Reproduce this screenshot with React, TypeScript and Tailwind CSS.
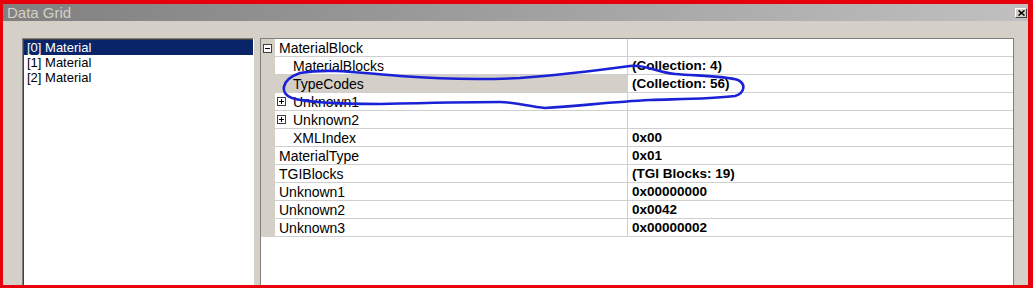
const font = { fontFamily: '"Liberation Sans", Arial, sans-serif' };

type Row = {
  label: string;
  value: string;
  indent: number;
  box?: "plus" | "minus";
  selected?: boolean;
};

const rows: Row[] = [
  { label: "MaterialBlock", value: "", indent: 0, box: "minus" },
  { label: "MaterialBlocks", value: "(Collection: 4)", indent: 1 },
  { label: "TypeCodes", value: "(Collection: 56)", indent: 1, selected: true },
  { label: "Unknown1", value: "", indent: 1, box: "plus" },
  { label: "Unknown2", value: "", indent: 1, box: "plus" },
  { label: "XMLIndex", value: "0x00", indent: 1 },
  { label: "MaterialType", value: "0x01", indent: 0 },
  { label: "TGIBlocks", value: "(TGI Blocks: 19)", indent: 0 },
  { label: "Unknown1", value: "0x00000000", indent: 0 },
  { label: "Unknown2", value: "0x0042", indent: 0 },
  { label: "Unknown3", value: "0x00000002", indent: 0 },
];

const items = ["[0] Material", "[1] Material", "[2] Material"];

function ExpandBox({ kind }: { kind: "plus" | "minus" }) {
  return (
    <svg width="9" height="9" viewBox="0 0 9 9" className="shrink-0">
      <rect x="0.5" y="0.5" width="8" height="8" fill="white" stroke="#404040" />
      <line x1="2" y1="4.5" x2="7" y2="4.5" stroke="black" />
      {kind === "plus" && <line x1="4.5" y1="2" x2="4.5" y2="7" stroke="black" />}
    </svg>
  );
}

function GridRow({ row }: { row: Row }) {
  return (
    <div className="flex h-[18px]">
      <div className="w-[14px] shrink-0 bg-[#d4d0c8] flex items-center justify-end pr-[3px]">
        {row.indent === 0 && row.box && <ExpandBox kind={row.box} />}
      </div>
      <div
        className={`w-[353px] shrink-0 flex items-center border-b border-r border-[#cfcfcf] text-[14px] text-black ${
          row.selected ? "bg-[#d4d0c8]" : "bg-white"
        } ${row.indent ? "pl-[2px]" : "pl-[4px]"}`}
      >
        {row.indent > 0 && (
          <span className="w-[16px] flex items-center">
            {row.box && <ExpandBox kind={row.box} />}
          </span>
        )}
        <span className="leading-[17px] pt-[2px]">{row.label}</span>
      </div>
      <div className="flex-1 flex items-center border-b border-[#cfcfcf] pl-[4px] pt-[2px] text-[13.5px] font-bold text-black bg-white">
        {row.value}
      </div>
    </div>
  );
}

export default function App() {
  return (
    <div
      className="relative w-[1033px] h-[288px] border-red-600 border-l-[3px] border-t-[4px] border-r-[5px] border-b-[3px] bg-[#d4d0c8] flex flex-col overflow-hidden"
      style={font}
    >
      {/* title bar */}
      <div className="h-[17px] shrink-0 flex items-center bg-gradient-to-r from-[#808080] to-[#c0c0c0] pl-[4px] pr-[1px]">
        <span className="text-[15px] leading-[17px] text-[#d4d0c8]">Data Grid</span>
        <div className="ml-auto w-[12px] h-[10px] bg-[#d4d0c8] border-t border-l border-white border-r border-b border-r-[#404040] border-b-[#404040] flex items-center justify-center">
          <svg width="7" height="6" viewBox="0 0 7 6">
            <path d="M0.5 0.5 L6.5 5.5 M6.5 0.5 L0.5 5.5" stroke="black" strokeWidth="1.6" />
          </svg>
        </div>
      </div>

      {/* body */}
      <div className="flex-1 flex pl-[19px] pt-[17px] pr-[14px] min-h-0">
        {/* list */}
        <div className="w-[232px] shrink-0 bg-white border-t border-l border-[#808080] shadow-[inset_1px_1px_0_#404040] border-r border-r-white pt-[1px] pl-[1px]">
          {items.map((it, i) => (
            <div
              key={it}
              className={`h-[15px] leading-[16px] text-[13px] pl-[3px] ${
                i === 0 ? "bg-[#0a246a] text-white" : "text-black"
              }`}
            >
              {it}
            </div>
          ))}
        </div>

        {/* splitter */}
        <div className="w-[6px] shrink-0 bg-[#d4d0c8]" />

        {/* property grid */}
        <div className="flex-1 bg-white border-t border-l border-r border-[#808080] flex flex-col">
          {rows.map((r, i) => (
            <GridRow key={i} row={r} />
          ))}
        </div>
      </div>

      {/* hand-drawn annotation */}
      <svg
        className="absolute left-[-3px] top-[-4px] pointer-events-none"
        width="1033"
        height="288"
        viewBox="0 0 1033 288"
      >
        <path
          d="M300 73 C 330 68, 360 73, 400 76 C 440 79, 480 80, 520 78 C 560 75, 600 70, 630 66 C 645 64, 655 72, 675 74 C 700 76, 725 76, 738 80 C 746 84, 745 93, 735 96 C 710 99, 680 99, 650 100 C 610 102, 580 106, 545 108 C 530 107, 515 102, 500 102 C 460 102, 420 103, 380 104 C 340 104, 305 102, 292 98 C 280 94, 280 80, 300 73"
          fill="none"
          stroke="#1b22d6"
          strokeWidth="2.6"
          strokeLinecap="round"
          strokeLinejoin="round"
        />
      </svg>
    </div>
  );
}
